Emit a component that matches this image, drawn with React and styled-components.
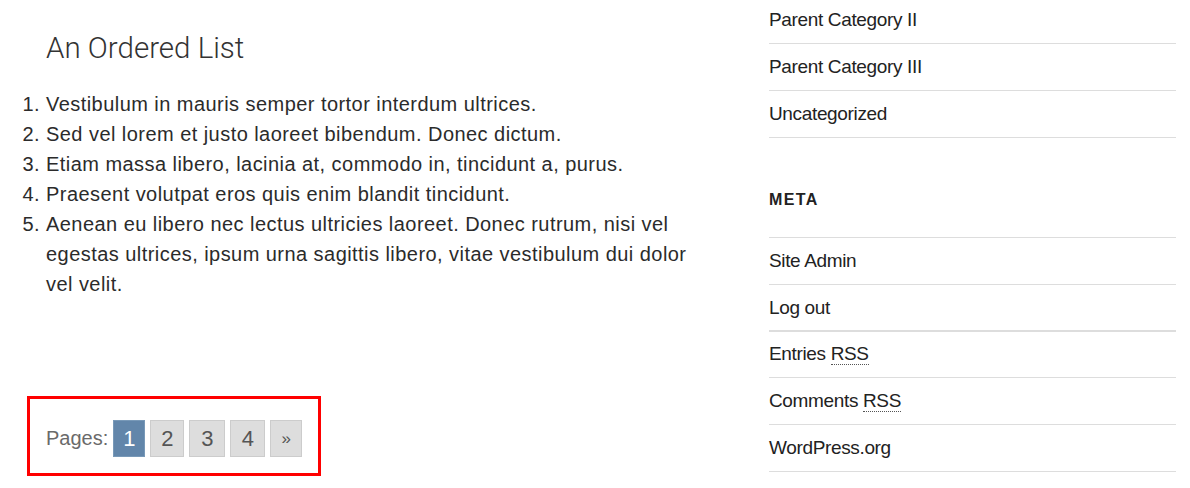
import React from "react";
import styled, { createGlobalStyle } from "styled-components";

const Global = createGlobalStyle`
  html, body { margin: 0; padding: 0; background: #fff; }
  body {
    font-family: "Liberation Sans", Arial, sans-serif;
    color: #222;
    overflow: hidden;
  }
`;

const Page = styled.div`
  display: flex;
  width: 1190px;
  height: 488px;
  overflow: hidden;
`;

const Main = styled.main`
  flex: 0 0 769px;
  box-sizing: border-box;
  padding: 30px 69px 0 27px;
  display: flex;
  flex-direction: column;
`;

const Heading = styled.h2`
  margin: 0 0 22px 19px;
  font-family: Roboto, "Liberation Sans", sans-serif;
  font-weight: 300;
  font-size: 29.5px;
  line-height: 37px;
  color: #333;
`;

const List = styled.ol`
  margin: 0 0 97px 0;
  padding: 0 0 0 19px;
  font-size: 20px;
  line-height: 30px;
  letter-spacing: 0.45px;
  color: #2b2b2b;
`;

const Item = styled.li``;

const Pagination = styled.nav`
  box-sizing: border-box;
  width: 294px;
  height: 80px;
  border: 3px solid #f00;
  padding: 21px 0 0 16px;
  display: flex;
  align-items: flex-start;
  align-self: flex-start;
  gap: 5px;
`;

const PagesLabel = styled.span`
  font-size: 20px;
  color: #6a6a6a;
  line-height: 37px;
  height: 37px;
`;

const PageBox = styled.span`
  box-sizing: border-box;
  height: 37px;
  width: ${(p) => p.$w}px;
  display: inline-flex;
  align-items: center;
  justify-content: center;
  border: 1px solid ${(p) => (p.$active ? "#7899b8" : "#cccccc")};
  background: ${(p) => (p.$active ? "#6286aa" : "#dddddd")};
  color: ${(p) => (p.$active ? "#ffffff" : "#555555")};
  font-size: ${(p) => (p.$arrow ? 17 : 22)}px;
  line-height: 1;
`;

const Sidebar = styled.aside`
  flex: 0 0 407px;
  margin-top: -3px;
  display: flex;
  flex-direction: column;
`;

const WidgetList = styled.ul`
  list-style: none;
  margin: 0;
  padding: 0;
  border-top: ${(p) => (p.$top ? "1px solid #ddd" : "none")};
`;

const Row = styled.li`
  padding: ${(p) => p.$pad || "8px 0"};
  line-height: 30px;
  font-size: 19px;
  letter-spacing: -0.35px;
  color: #222;
  border-bottom: ${(p) => (p.$thick ? 2 : 1)}px solid #ddd;
`;

const Abbr = styled.abbr`
  text-decoration: none;
  border-bottom: 1px dotted #555;
`;

const WidgetTitle = styled.h2`
  margin: 52px 0 27px;
  font-size: 16px;
  line-height: 20px;
  font-weight: 800;
  letter-spacing: 1.4px;
  text-transform: uppercase;
  color: #222;
`;

const items = [
  "Vestibulum in mauris semper tortor interdum ultrices.",
  "Sed vel lorem et justo laoreet bibendum. Donec dictum.",
  "Etiam massa libero, lacinia at, commodo in, tincidunt a, purus.",
  "Praesent volutpat eros quis enim blandit tincidunt.",
  "Aenean eu libero nec lectus ultricies laoreet. Donec rutrum, nisi vel egestas ultrices, ipsum urna sagittis libero, vitae vestibulum dui dolor vel velit.",
];

export default function App() {
  return (
    <>
      <Global />
      <Page>
        <Main>
          <Heading>An Ordered List</Heading>
          <List>
            {items.map((t) => (
              <Item key={t}>{t}</Item>
            ))}
          </List>
          <Pagination>
            <PagesLabel>Pages:</PagesLabel>
            <PageBox $active $w={32}>1</PageBox>
            <PageBox $w={34}>2</PageBox>
            <PageBox $w={36}>3</PageBox>
            <PageBox $w={35}>4</PageBox>
            <PageBox $arrow $w={32}>»</PageBox>
          </Pagination>
        </Main>
        <Sidebar>
          <WidgetList>
            <Row>Parent Category II</Row>
            <Row>Parent Category III</Row>
            <Row>Uncategorized</Row>
          </WidgetList>
          <WidgetTitle>Meta</WidgetTitle>
          <WidgetList $top>
            <Row>Site Admin</Row>
            <Row $pad="8px 0 7px" $thick>Log out</Row>
            <Row $pad="7px 0 8px">Entries <Abbr title="Really Simple Syndication">RSS</Abbr></Row>
            <Row>Comments <Abbr title="Really Simple Syndication">RSS</Abbr></Row>
            <Row>WordPress.org</Row>
          </WidgetList>
        </Sidebar>
      </Page>
    </>
  );
}
